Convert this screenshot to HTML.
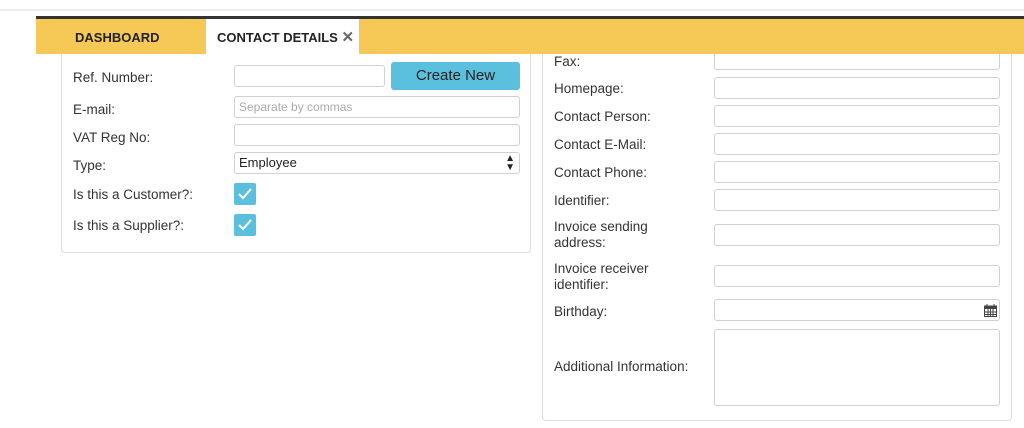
<!DOCTYPE html>
<html><head><style>
*{box-sizing:border-box}
body{margin:0;width:1024px;height:428px;overflow:hidden;background:#fff;font-family:"Liberation Sans",sans-serif;font-size:13.5px;color:#333;position:relative}
.a{position:absolute}
.in{position:absolute;border:1px solid #cfcfd6;border-radius:3px;background:#fff}
.l{position:absolute;line-height:16px}
.cb{position:absolute;width:22px;height:22px;background:#5bc0de;border-radius:2px}
</style></head><body>
<div class="a" style="left:0;top:9px;width:1024px;height:2px;background:#eee"></div>
<div class="a" style="left:61px;top:40px;width:470px;height:213px;border:1px solid #ddd;border-radius:4px"></div>
<div class="a" style="left:542px;top:40px;width:470px;height:381px;border:1px solid #ddd;border-radius:4px"></div>
<div class="a" style="left:36px;top:16px;width:988px;height:3px;background:#333"></div>
<div class="a" style="left:36px;top:19px;width:988px;height:35px;background:#f6c957"></div>
<div class="a" style="left:206px;top:19px;width:153px;height:36px;background:#fff"></div>
<div class="a" style="left:75px;top:30px;font-weight:bold;font-size:13px;color:#222">DASHBOARD</div>
<div class="a" style="left:217px;top:28px;font-weight:bold;font-size:13px;color:#222">CONTACT DETAILS <span style="color:#666;font-size:15px">✕</span></div>

<div class="l" style="left:73px;top:70px">Ref. Number:</div>
<div class="in" style="left:234px;top:65px;width:151px;height:22px"></div>
<div class="a" style="left:391px;top:62px;width:129px;height:28px;background:#5bc0de;border-radius:3px;color:#222;font-size:15px;text-align:center;line-height:27px">Create New</div>
<div class="l" style="left:73px;top:102px">E-mail:</div>
<div class="in" style="left:234px;top:96px;width:286px;height:22px;color:#aaa;font-size:12px;padding:3px 4px">Separate by commas</div>
<div class="l" style="left:73px;top:130px">VAT Reg No:</div>
<div class="in" style="left:234px;top:124px;width:286px;height:22px"></div>
<div class="l" style="left:73px;top:158px">Type:</div>
<div class="in" style="left:234px;top:152px;width:286px;height:22px;font-size:13px;padding:2px 4px;color:#222">Employee<span style="position:absolute;right:4px;top:1px;font-size:10px;line-height:9px">▲<br>▼</span></div>
<div class="l" style="left:73px;top:187px">Is this a Customer?:</div>
<div class="cb" style="left:234px;top:183px"><svg width="22" height="22"><path d="M5 11l4 4 8-9" stroke="#fff" stroke-width="2" fill="none"/></svg></div>
<div class="l" style="left:73px;top:218px">Is this a Supplier?:</div>
<div class="cb" style="left:234px;top:214px"><svg width="22" height="22"><path d="M5 11l4 4 8-9" stroke="#fff" stroke-width="2" fill="none"/></svg></div>

<div class="in" style="left:714px;top:48px;width:286px;height:22px"></div>
<div class="a" style="left:542px;top:19px;width:482px;height:35px;background:#f6c957"></div>
<div class="l" style="left:554px;top:54px">Fax:</div>
<div class="l" style="left:554px;top:81px">Homepage:</div>
<div class="in" style="left:714px;top:77px;width:286px;height:22px"></div>
<div class="l" style="left:554px;top:109px">Contact Person:</div>
<div class="in" style="left:714px;top:105px;width:286px;height:22px"></div>
<div class="l" style="left:554px;top:137px">Contact E-Mail:</div>
<div class="in" style="left:714px;top:133px;width:286px;height:22px"></div>
<div class="l" style="left:554px;top:165px">Contact Phone:</div>
<div class="in" style="left:714px;top:161px;width:286px;height:22px"></div>
<div class="l" style="left:554px;top:193px">Identifier:</div>
<div class="in" style="left:714px;top:189px;width:286px;height:22px"></div>
<div class="l" style="left:554px;top:219px">Invoice sending<br>address:</div>
<div class="in" style="left:714px;top:224px;width:286px;height:22px"></div>
<div class="l" style="left:554px;top:261px">Invoice receiver<br>identifier:</div>
<div class="in" style="left:714px;top:265px;width:286px;height:22px"></div>
<div class="l" style="left:554px;top:304px">Birthday:</div>
<div class="in" style="left:714px;top:299px;width:286px;height:22px"><svg class="a" style="left:269px;top:4px" width="13" height="13"><rect x="0.5" y="2" width="12" height="10.5" fill="#fff" stroke="#444"/><rect x="0.5" y="2" width="12" height="3" fill="#444"/><path d="M3 0v3M10 0v3M1 8h11M1 10.5h11M4 5v7M6.5 5v7M9 5v7" stroke="#444" stroke-width="1"/></svg></div>
<div class="l" style="left:554px;top:359px">Additional Information:</div>
<div class="in" style="left:714px;top:329px;width:286px;height:77px"></div>
</body></html>
